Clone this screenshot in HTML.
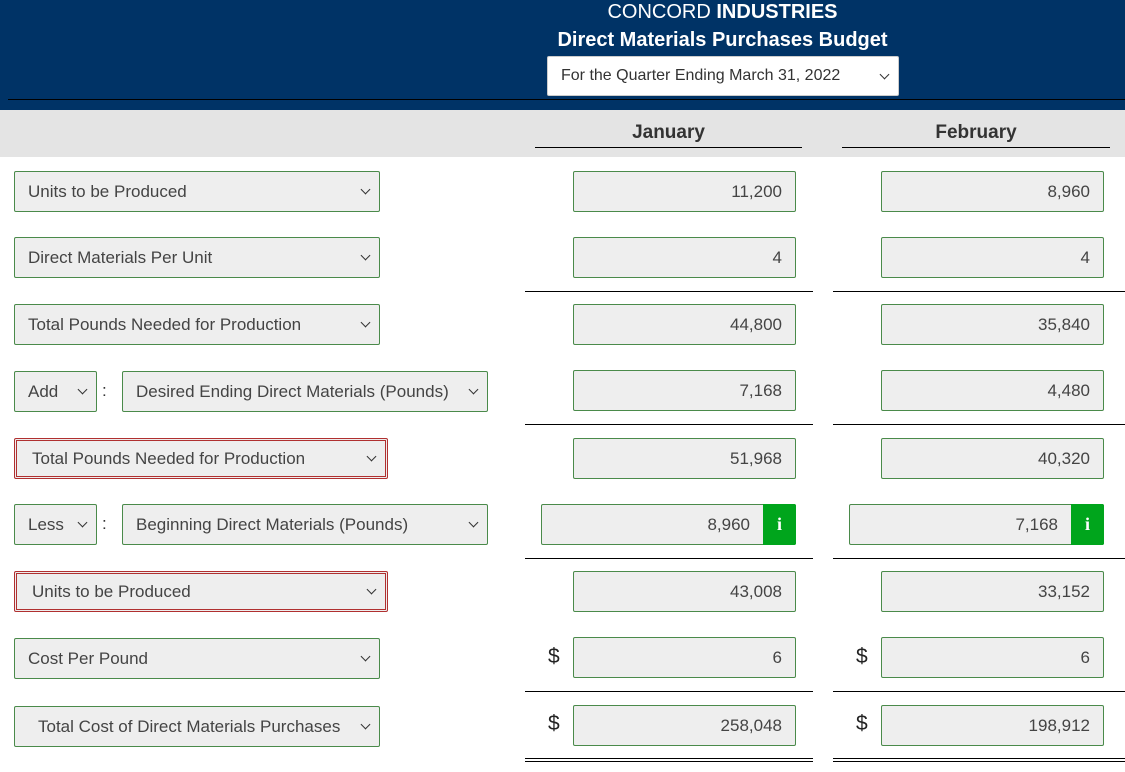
<!DOCTYPE html><html><head><style>
body{margin:0;width:1125px;height:772px;position:relative;background:#fff;font-family:"Liberation Sans",sans-serif;overflow:hidden}
.a{position:absolute}
.sel{position:absolute;box-sizing:border-box;height:41px;border:1px solid #4a8a4a;border-radius:2px;background:#eee;color:#444;font-size:17px;line-height:39px;padding-left:13px}
.sel:after{content:"";position:absolute;right:10px;top:14px;width:6px;height:6px;border-right:1.5px solid #333;border-bottom:1.5px solid #333;transform:rotate(45deg)}
.red{border:3px double #b03030;padding-left:15px;line-height:35px}
.red:after{top:12px}
.inp{position:absolute;box-sizing:border-box;height:41px;border:1px solid #4a8a4a;border-radius:2px;background:#eee;color:#444;font-size:17px;line-height:39px;text-align:right;padding-right:13px}
.ln{position:absolute;height:1px;background:#000}
.d{position:absolute;font-size:21px;color:#222}
.info{position:absolute;top:-1px;right:-1px;width:33px;height:41px;background:#00a51c;color:#fff;font-weight:bold;font-family:"Liberation Serif",serif;font-size:18px;text-align:center;line-height:41px;border-radius:0 2px 2px 0}
</style></head><body>
<div class="a" style="left:0;top:0;width:1125px;height:110px;background:#003366"></div>
<div class="ln" style="left:8px;top:99px;width:1117px;background:#000"></div>
<div class="a" style="left:0;top:0px;width:1125px;text-align:center;color:#fff;font-size:20px;line-height:24px;padding-left:320px;box-sizing:border-box">CONCORD <b>INDUSTRIES</b></div>
<div class="a" style="left:0;top:28px;width:1125px;text-align:center;color:#fff;font-size:20px;font-weight:bold;line-height:24px;padding-left:320px;box-sizing:border-box">Direct Materials Purchases Budget</div>
<div class="sel" style="left:547px;top:56px;width:352px;height:40px;background:#fff;border-color:#ccc;line-height:38px;color:#333;font-size:16px">For the Quarter Ending March 31, 2022</div>
<div class="a" style="left:0;top:110px;width:1125px;height:47px;background:#e4e4e4"></div>
<div class="a" style="left:535px;top:122px;width:267px;text-align:center;font-weight:bold;font-size:19px;color:#333">January</div>
<div class="a" style="left:842px;top:122px;width:268px;text-align:center;font-weight:bold;font-size:19px;color:#333">February</div>
<div class="ln" style="left:535px;top:147px;width:267px"></div>
<div class="ln" style="left:842px;top:147px;width:268px"></div>

<div class="sel" style="left:14px;top:171px;width:366px">Units to be Produced</div>
<div class="inp" style="left:573px;top:171px;width:223px">11,200</div>
<div class="inp" style="left:881px;top:171px;width:223px">8,960</div>

<div class="sel" style="left:14px;top:237px;width:366px">Direct Materials Per Unit</div>
<div class="inp" style="left:573px;top:237px;width:223px">4</div>
<div class="inp" style="left:881px;top:237px;width:223px">4</div>
<div class="ln" style="left:525px;top:291px;width:288px"></div>
<div class="ln" style="left:833px;top:291px;width:292px"></div>

<div class="sel" style="left:14px;top:304px;width:366px">Total Pounds Needed for Production</div>
<div class="inp" style="left:573px;top:304px;width:223px">44,800</div>
<div class="inp" style="left:881px;top:304px;width:223px">35,840</div>

<div class="sel" style="left:14px;top:371px;width:83px">Add</div>
<div class="a" style="left:102px;top:381px;font-size:17px;color:#333">:</div>
<div class="sel" style="left:122px;top:371px;width:366px">Desired Ending Direct Materials (Pounds)</div>
<div class="inp" style="left:573px;top:370px;width:223px">7,168</div>
<div class="inp" style="left:881px;top:370px;width:223px">4,480</div>
<div class="ln" style="left:525px;top:424px;width:288px"></div>
<div class="ln" style="left:833px;top:424px;width:292px"></div>

<div class="sel red" style="left:14px;top:438px;width:374px">Total Pounds Needed for Production</div>
<div class="inp" style="left:573px;top:438px;width:223px">51,968</div>
<div class="inp" style="left:881px;top:438px;width:223px">40,320</div>

<div class="sel" style="left:14px;top:504px;width:83px">Less</div>
<div class="a" style="left:102px;top:514px;font-size:17px;color:#333">:</div>
<div class="sel" style="left:122px;top:504px;width:366px">Beginning Direct Materials (Pounds)</div>
<div class="inp" style="left:541px;top:504px;width:255px;padding-right:45px">8,960<div class="info">i</div></div>
<div class="inp" style="left:849px;top:504px;width:255px;padding-right:45px">7,168<div class="info">i</div></div>
<div class="ln" style="left:525px;top:558px;width:288px"></div>
<div class="ln" style="left:833px;top:558px;width:292px"></div>

<div class="sel red" style="left:14px;top:571px;width:374px">Units to be Produced</div>
<div class="inp" style="left:573px;top:571px;width:223px">43,008</div>
<div class="inp" style="left:881px;top:571px;width:223px">33,152</div>

<div class="sel" style="left:14px;top:638px;width:366px">Cost Per Pound</div>
<div class="d" style="left:548px;top:645px">$</div>
<div class="inp" style="left:573px;top:637px;width:223px">6</div>
<div class="d" style="left:856px;top:645px">$</div>
<div class="inp" style="left:881px;top:637px;width:223px">6</div>
<div class="ln" style="left:525px;top:691px;width:288px"></div>
<div class="ln" style="left:833px;top:691px;width:292px"></div>

<div class="sel" style="left:14px;top:706px;width:366px;padding-left:23px">Total Cost of Direct Materials Purchases</div>
<div class="d" style="left:548px;top:712px">$</div>
<div class="inp" style="left:573px;top:705px;width:223px">258,048</div>
<div class="d" style="left:856px;top:712px">$</div>
<div class="inp" style="left:881px;top:705px;width:223px">198,912</div>
<div class="ln" style="left:525px;top:758px;width:288px"></div>
<div class="ln" style="left:525px;top:761px;width:288px"></div>
<div class="ln" style="left:833px;top:758px;width:292px"></div>
<div class="ln" style="left:833px;top:761px;width:292px"></div>
</body></html>
